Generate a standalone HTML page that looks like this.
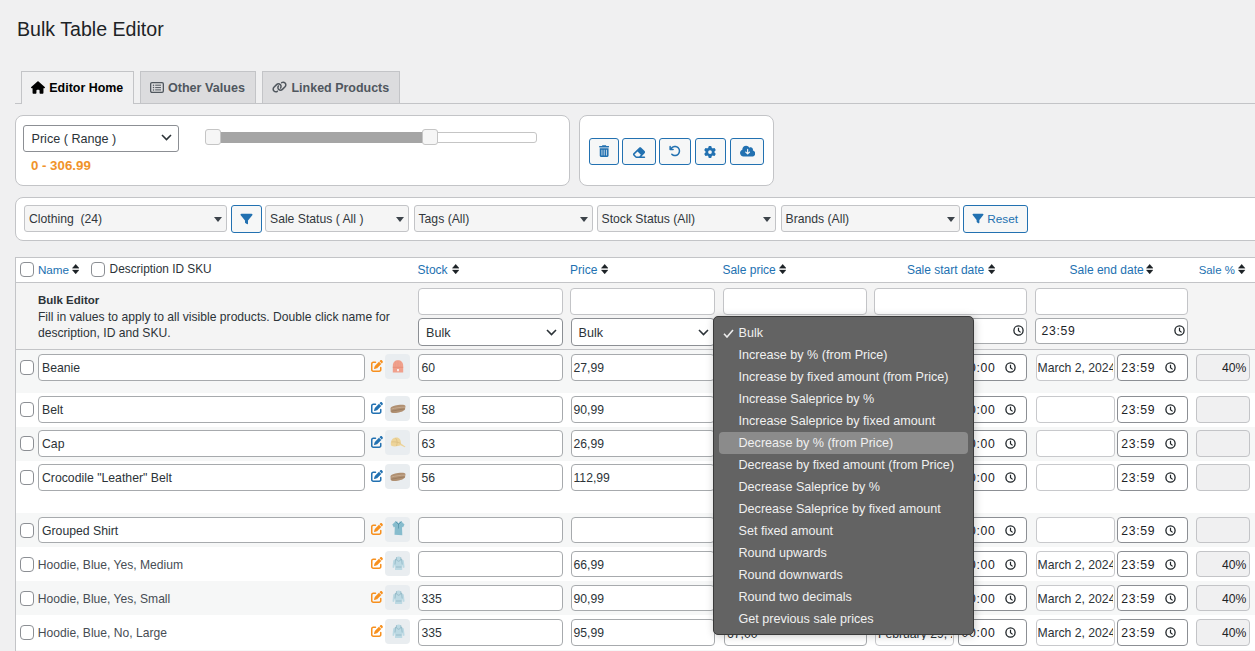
<!DOCTYPE html><html><head><meta charset="utf-8"><style>
html,body{margin:0;padding:0;width:1255px;height:651px;overflow:hidden;background:#f0f0f1;font-family:"Liberation Sans", sans-serif;}
.t{position:absolute;white-space:nowrap;}
.b{position:absolute;box-sizing:border-box;}

</style></head><body>
<div class="t" style="left:17px;top:20.21px;font-size:19.6px;line-height:19.6px;font-weight:400;color:#1d2327;">Bulk Table Editor</div>
<div class="b" style="left:15px;top:103px;width:1240px;height:1px;background:#c3c4c7;"></div>
<div class="b" style="left:21px;top:71px;width:113px;height:33px;background:#f0f0f1;border:1px solid #c3c4c7;border-bottom:none;"></div>
<div class="b" style="left:140px;top:71px;width:115.5px;height:32px;background:#dcdcde;border:1px solid #c3c4c7;border-bottom:none;"></div>
<div class="b" style="left:262px;top:71px;width:137.5px;height:32px;background:#dcdcde;border:1px solid #c3c4c7;border-bottom:none;"></div>
<svg class="b" style="left:31px;top:81px;" width="14" height="13" viewBox="0 0 576 512"><path fill="#000" d="M575.8 255.5c0 18-15 32.1-32 32.1h-32l.7 160.2c0 2.7-.2 5.4-.5 8.1V472c0 22.1-17.9 40-40 40H456c-1.1 0-2.2 0-3.3-.1c-1.4 .1-2.8 .1-4.2 .1H416 392c-22.1 0-40-17.9-40-40V448 384c0-17.7-14.3-32-32-32H256c-17.7 0-32 14.3-32 32v64 24c0 22.1-17.9 40-40 40H160 128.1c-1.5 0-3-.1-4.5-.2c-1.2 .1-2.4 .2-3.6 .2H104c-22.1 0-40-17.9-40-40V360c0-.9 0-1.9 .1-2.8V287.6H32c-18 0-32-14-32-32.1c0-9 3-17 10-24L266.4 8c7-7 15-8 22-8s15 2 21 7L564.8 231.5c8 7 12 15 11 24z"/></svg>
<div class="t" style="left:49.3px;top:82.26px;font-size:12.45px;line-height:12.45px;font-weight:700;color:#000;">Editor Home</div>
<svg class="b" style="left:150.2px;top:81.8px;" width="14" height="11" viewBox="0 0 14 11"><rect x="0.65" y="0.65" width="12.7" height="9.7" rx="1.3" stroke="#50575e" stroke-width="1.3" fill="none"/><circle cx="3.5" cy="3.2" r="0.75" fill="#50575e"/><circle cx="3.5" cy="5.6" r="0.75" fill="#50575e"/><circle cx="3.5" cy="7.9" r="0.75" fill="#50575e"/><path d="M5.2 3.2H11M5.2 5.6H11M5.2 7.9H11" stroke="#50575e" stroke-width="1"/></svg>
<div class="t" style="left:167.9px;top:82.13px;font-size:12.6px;line-height:12.6px;font-weight:700;color:#50575e;">Other Values</div>
<svg class="b" style="left:272px;top:80.5px;" width="15" height="12" viewBox="0 0 640 512"><path fill="#50575e" d="M579.8 267.7c56.5-56.5 56.5-148 0-204.5c-50-50-128.8-56.5-186.3-15.4l-1.6 1.1c-14.4 10.3-17.7 30.3-7.4 44.6s30.3 17.7 44.6 7.4l1.6-1.1c32.1-22.9 76-19.3 103.8 8.6c31.5 31.5 31.5 82.5 0 114L422.3 334.8c-31.5 31.5-82.5 31.5-114 0c-27.9-27.9-31.5-71.8-8.6-103.8l1.1-1.6c10.3-14.4 6.9-34.4-7.4-44.6s-34.4-6.9-44.6 7.4l-1.1 1.6C206.5 251.2 213 330 263 380c56.5 56.5 148 56.5 204.5 0L579.8 267.7zM60.2 244.3c-56.5 56.5-56.5 148 0 204.5c50 50 128.8 56.5 186.3 15.4l1.6-1.1c14.4-10.3 17.7-30.3 7.4-44.6s-30.3-17.7-44.6-7.4l-1.6 1.1c-32.1 22.9-76 19.3-103.8-8.6C74 372 74 321 105.5 289.5L217.7 177.2c31.5-31.5 82.5-31.5 114 0c27.9 27.9 31.5 71.8 8.6 103.9l-1.1 1.6c-10.3 14.4-6.9 34.4 7.4 44.6s34.4 6.9 44.6-7.4l1.1-1.6C433.5 260.8 427 182 377 132c-56.5-56.5-148-56.5-204.5 0L60.2 244.3z"/></svg>
<div class="t" style="left:291.5px;top:82.24px;font-size:12.47px;line-height:12.47px;font-weight:700;color:#50575e;">Linked Products</div>
<div class="b" style="left:15px;top:115px;width:555px;height:71px;background:#fff;border:1px solid #c3c4c7;border-radius:8px;"></div>
<div class="b" style="left:23px;top:125px;width:156px;height:27px;background:#fff;border:1px solid #8c8f94;border-radius:3px;"></div>
<div class="t" style="left:31.5px;top:133.13px;font-size:12.6px;line-height:12.6px;font-weight:400;color:#2c3338;">Price ( Range )</div>
<svg class="b" style="left:161px;top:134px;" width="11" height="7" viewBox="0 0 11 7"><path d="M1 1 L5.5 5.5 L10 1" stroke="#2c3338" stroke-width="1.6" fill="none"/></svg>
<div class="t" style="left:30.9px;top:158.94px;font-size:13.3px;line-height:13.3px;font-weight:700;color:#f0932b;">0 - 306.99</div>
<div class="b" style="left:205px;top:132px;width:332px;height:11px;background:#fff;border:1px solid #c5c5c5;border-radius:3px;"></div>
<div class="b" style="left:213px;top:132px;width:217px;height:11px;background:#a5a5a5;"></div>
<div class="b" style="left:205px;top:129px;width:16px;height:16px;background:#f6f6f6;border:1px solid #c5c5c5;border-radius:3px;"></div>
<div class="b" style="left:422px;top:129px;width:16px;height:16px;background:#f6f6f6;border:1px solid #c5c5c5;border-radius:3px;"></div>
<div class="b" style="left:579px;top:115px;width:195px;height:71px;background:#fff;border:1px solid #c3c4c7;border-radius:8px;"></div>
<div class="b" style="left:589px;top:138px;width:30px;height:27px;background:#f6f7f7;border:1px solid #2271b1;border-radius:3px;"></div>
<div class="b" style="left:622px;top:138px;width:34px;height:27px;background:#f6f7f7;border:1px solid #2271b1;border-radius:3px;"></div>
<div class="b" style="left:659px;top:138px;width:32px;height:27px;background:#f6f7f7;border:1px solid #2271b1;border-radius:3px;"></div>
<div class="b" style="left:695px;top:138px;width:31px;height:27px;background:#f6f7f7;border:1px solid #2271b1;border-radius:3px;"></div>
<div class="b" style="left:730px;top:138px;width:34px;height:27px;background:#f6f7f7;border:1px solid #2271b1;border-radius:3px;"></div>
<svg class="b" style="left:598.8px;top:145px;" width="10.3" height="12.3" viewBox="0 0 448 512"><path fill="#2271b1" d="M135.2 17.7C140.6 6.8 151.7 0 163.8 0H284.2c12.1 0 23.2 6.8 28.6 17.7L320 32h96c17.7 0 32 14.3 32 32s-14.3 32-32 32H32C14.3 96 0 81.7 0 64S14.3 32 32 32h96l7.2-14.3zM32 128H416V448c0 35.3-28.7 64-64 64H96c-35.3 0-64-28.7-64-64V128zm96 64c-8.8 0-16 7.2-16 16V432c0 8.8 7.2 16 16 16s16-7.2 16-16V208c0-8.8-7.2-16-16-16zm96 0c-8.8 0-16 7.2-16 16V432c0 8.8 7.2 16 16 16s16-7.2 16-16V208c0-8.8-7.2-16-16-16zm96 0c-8.8 0-16 7.2-16 16V432c0 8.8 7.2 16 16 16s16-7.2 16-16V208c0-8.8-7.2-16-16-16z"/></svg>
<svg class="b" style="left:632px;top:145.5px;" width="14" height="13" viewBox="0 0 576 512"><path fill="#2271b1" d="M290.7 57.4L57.4 290.7c-25 25-25 65.5 0 90.5l80 80c12 12 28.3 18.7 45.3 18.7H288h9.4H512c17.7 0 32-14.3 32-32s-14.3-32-32-32H387.9L518.6 285.3c25-25 25-65.5 0-90.5L381.3 57.4c-25-25-65.5-25-90.5 0zM297.4 416H288l-105.4 0-80-80L227.3 211.3 364.7 348.7 297.4 416z"/></svg>
<svg class="b" style="left:668.5px;top:145px;" width="12" height="12" viewBox="0 0 512 512"><path fill="#2271b1" d="M125.7 160H176c17.7 0 32 14.3 32 32s-14.3 32-32 32H48c-17.7 0-32-14.3-32-32V64c0-17.7 14.3-32 32-32s32 14.3 32 32v51.2L97.6 97.6c87.5-87.5 229.3-87.5 316.8 0s87.5 229.3 0 316.8s-229.3 87.5-316.8 0c-12.5-12.5-12.5-32.8 0-45.3s32.8-12.5 45.3 0c62.5 62.5 163.8 62.5 226.3 0s62.5-163.8 0-226.3s-163.8-62.5-226.3 0L125.7 160z"/></svg>
<svg class="b" style="left:704.4px;top:145.6px;" width="12" height="12" viewBox="0 0 512 512"><path fill="#2271b1" d="M495.9 166.6c3.2 8.7 .5 18.4-6.4 24.6l-43.3 39.4c1.1 8.3 1.7 16.8 1.7 25.4s-.6 17.1-1.7 25.4l43.3 39.4c6.9 6.2 9.6 15.9 6.4 24.6c-4.4 11.9-9.7 23.3-15.8 34.3l-4.7 8.1c-6.6 11-14 21.4-22.1 31.2c-5.9 7.2-15.7 9.6-24.5 6.8l-55.7-17.7c-13.4 10.3-28.2 18.9-44 25.4l-12.5 57.1c-2 9.1-9 16.3-18.2 17.8c-13.8 2.3-28 3.5-42.5 3.5s-28.7-1.2-42.5-3.5c-9.2-1.5-16.2-8.7-18.2-17.8l-12.5-57.1c-15.8-6.5-30.6-15.1-44-25.4L83.1 425.9c-8.8 2.8-18.6 .3-24.5-6.8c-8.1-9.8-15.5-20.2-22.1-31.2l-4.7-8.1c-6.1-11-11.4-22.4-15.8-34.3c-3.2-8.7-.5-18.4 6.4-24.6l43.3-39.4C64.6 273.1 64 264.6 64 256s.6-17.1 1.7-25.4L22.4 191.2c-6.9-6.2-9.6-15.9-6.4-24.6c4.4-11.9 9.7-23.3 15.8-34.3l4.7-8.1c6.6-11 14-21.4 22.1-31.2c5.9-7.2 15.7-9.6 24.5-6.8l55.7 17.7c13.4-10.3 28.2-18.9 44-25.4l12.5-57.1c2-9.1 9-16.3 18.2-17.8C227.3 1.2 241.5 0 256 0s28.7 1.2 42.5 3.5c9.2 1.5 16.2 8.7 18.2 17.8l12.5 57.1c15.8 6.5 30.6 15.1 44 25.4l55.7-17.7c8.8-2.8 18.6-.3 24.5 6.8c8.1 9.8 15.5 20.2 22.1 31.2l4.7 8.1c6.1 11 11.4 22.4 15.8 34.3zM256 336a80 80 0 1 0 0-160 80 80 0 1 0 0 160z"/></svg>
<svg class="b" style="left:739.5px;top:145.2px;" width="15.3" height="12.2" viewBox="0 0 640 512"><path fill="#2271b1" d="M144 480C64.5 480 0 415.5 0 336c0-62.8 40.2-116.2 96.2-135.9c-.1-2.7-.2-5.4-.2-8.1c0-88.4 71.6-160 160-160c59.3 0 111 32.2 138.7 80.2C409.9 102 428.3 96 448 96c53 0 96 43 96 96c0 12.2-2.3 23.8-6.4 34.6C596 238.4 640 290.1 640 352c0 70.7-57.3 128-128 128H144zm79-167l80 80c9.4 9.4 24.6 9.4 33.9 0l80-80c9.4-9.4 9.4-24.6 0-33.9s-24.6-9.4-33.9 0l-39 39V184c0-13.3-10.7-24-24-24s-24 10.7-24 24V318.1l-39-39c-9.4-9.4-24.6-9.4-33.9 0s-9.4 24.6 0 33.9z"/></svg>
<div class="b" style="left:15px;top:197px;width:1285px;height:44px;background:#fff;border:1px solid #c3c4c7;border-radius:8px;"></div>
<div class="b" style="left:24px;top:205px;width:203px;height:27px;background:#f5f5f5;border:1px solid #c3c4c7;border-radius:3px;"></div>
<div class="t" style="left:29px;top:212.97px;font-size:12.2px;line-height:12.2px;font-weight:400;color:#32373c;">Clothing&nbsp; (24)</div>
<svg class="b" style="left:214px;top:217px;" width="8" height="5" viewBox="0 0 8 5"><path d="M0 0 L8 0 L4 5 Z" fill="#3c434a"/></svg>
<div class="b" style="left:231px;top:205px;width:31px;height:27.5px;background:#f6f7f7;border:1px solid #2271b1;border-radius:3px;"></div>
<svg class="b" style="left:240px;top:212.5px;" width="13" height="12" viewBox="0 0 512 512"><path fill="#2271b1" d="M3.9 54.9C10.5 40.9 24.5 32 40 32H472c15.5 0 29.5 8.9 36.1 22.9s4.6 30.5-5.2 42.5L320 320.9V448c0 12.1-6.8 23.2-17.7 28.6s-23.8 4.3-33.5-3l-64-48c-8.1-6-12.8-15.5-12.8-25.6V320.9L9 97.3C-.7 85.4-2.8 68.8 3.9 54.9z"/></svg>
<div class="b" style="left:265px;top:205px;width:144px;height:27px;background:#f5f5f5;border:1px solid #c3c4c7;border-radius:3px;"></div>
<div class="t" style="left:270px;top:212.97px;font-size:12.2px;line-height:12.2px;font-weight:400;color:#32373c;">Sale Status ( All )</div>
<svg class="b" style="left:396px;top:217px;" width="8" height="5" viewBox="0 0 8 5"><path d="M0 0 L8 0 L4 5 Z" fill="#3c434a"/></svg>
<div class="b" style="left:413.5px;top:205px;width:179.0px;height:27px;background:#f5f5f5;border:1px solid #c3c4c7;border-radius:3px;"></div>
<div class="t" style="left:418.5px;top:212.97px;font-size:12.2px;line-height:12.2px;font-weight:400;color:#32373c;">Tags (All)</div>
<svg class="b" style="left:579.5px;top:217px;" width="8" height="5" viewBox="0 0 8 5"><path d="M0 0 L8 0 L4 5 Z" fill="#3c434a"/></svg>
<div class="b" style="left:596.5px;top:205px;width:179.0px;height:27px;background:#f5f5f5;border:1px solid #c3c4c7;border-radius:3px;"></div>
<div class="t" style="left:601.5px;top:212.97px;font-size:12.2px;line-height:12.2px;font-weight:400;color:#32373c;">Stock Status (All)</div>
<svg class="b" style="left:762.5px;top:217px;" width="8" height="5" viewBox="0 0 8 5"><path d="M0 0 L8 0 L4 5 Z" fill="#3c434a"/></svg>
<div class="b" style="left:780.5px;top:205px;width:179.0px;height:27px;background:#f5f5f5;border:1px solid #c3c4c7;border-radius:3px;"></div>
<div class="t" style="left:785.5px;top:212.97px;font-size:12.2px;line-height:12.2px;font-weight:400;color:#32373c;">Brands (All)</div>
<svg class="b" style="left:946.5px;top:217px;" width="8" height="5" viewBox="0 0 8 5"><path d="M0 0 L8 0 L4 5 Z" fill="#3c434a"/></svg>
<div class="b" style="left:963px;top:205px;width:65px;height:27.5px;background:#f6f7f7;border:1px solid #2271b1;border-radius:3px;"></div>
<svg class="b" style="left:972px;top:213px;" width="12" height="11" viewBox="0 0 512 512"><path fill="#2271b1" d="M3.9 54.9C10.5 40.9 24.5 32 40 32H472c15.5 0 29.5 8.9 36.1 22.9s4.6 30.5-5.2 42.5L320 320.9V448c0 12.1-6.8 23.2-17.7 28.6s-23.8 4.3-33.5-3l-64-48c-8.1-6-12.8-15.5-12.8-25.6V320.9L9 97.3C-.7 85.4-2.8 68.8 3.9 54.9z"/></svg>
<div class="t" style="left:987.2px;top:213.61px;font-size:11.8px;line-height:11.8px;font-weight:400;color:#2271b1;">Reset</div>
<div class="b" style="left:15px;top:257px;width:1285px;height:443px;background:#fff;border:1px solid #c3c4c7;"></div>
<div class="b" style="left:16px;top:282px;width:1284px;height:1px;background:#c3c4c7;"></div>
<div class="b" style="left:20px;top:262px;width:14px;height:15px;border:1px solid #8c8f94;border-radius:4px;background:#fff;box-sizing:border-box;"></div>
<div class="t" style="left:37.9px;top:264.40px;font-size:11.7px;line-height:11.7px;font-weight:400;color:#2271b1;">Name</div>
<svg class="b" style="left:71.8px;top:263.7px;" width="7.4" height="10.2" viewBox="0 0 7.4 10.2"><path d="M3.7 0.3 L7.1 4.2 L0.3 4.2 Z M0.3 6 L7.1 6 L3.7 9.9 Z" fill="#1d2327" stroke="#1d2327" stroke-width="0.3" stroke-linejoin="round"/></svg>
<div class="b" style="left:91px;top:262px;width:14px;height:15px;border:1px solid #8c8f94;border-radius:4px;background:#fff;box-sizing:border-box;"></div>
<div class="t" style="left:109.6px;top:264.27px;font-size:11.85px;line-height:11.85px;font-weight:400;color:#2c3338;">Description ID SKU</div>
<div class="t" style="left:417.6px;top:264.14px;font-size:12px;line-height:12px;font-weight:400;color:#2271b1;">Stock</div>
<div class="t" style="left:570.1px;top:264.14px;font-size:12px;line-height:12px;font-weight:400;color:#2271b1;">Price</div>
<div class="t" style="left:722.4px;top:264.14px;font-size:12px;line-height:12px;font-weight:400;color:#2271b1;">Sale price</div>
<div class="t" style="left:906.9px;top:264.14px;font-size:12px;line-height:12px;font-weight:400;color:#2271b1;">Sale start date</div>
<div class="t" style="left:1069.6px;top:264.14px;font-size:12px;line-height:12px;font-weight:400;color:#2271b1;">Sale end date</div>
<div class="t" style="left:1198.7px;top:264.65px;font-size:11.4px;line-height:11.4px;font-weight:400;color:#2271b1;">Sale %</div>
<svg class="b" style="left:451.5px;top:263.7px;" width="7.4" height="10.2" viewBox="0 0 7.4 10.2"><path d="M3.7 0.3 L7.1 4.2 L0.3 4.2 Z M0.3 6 L7.1 6 L3.7 9.9 Z" fill="#1d2327" stroke="#1d2327" stroke-width="0.3" stroke-linejoin="round"/></svg>
<svg class="b" style="left:600.5px;top:263.7px;" width="7.4" height="10.2" viewBox="0 0 7.4 10.2"><path d="M3.7 0.3 L7.1 4.2 L0.3 4.2 Z M0.3 6 L7.1 6 L3.7 9.9 Z" fill="#1d2327" stroke="#1d2327" stroke-width="0.3" stroke-linejoin="round"/></svg>
<svg class="b" style="left:778.7px;top:263.7px;" width="7.4" height="10.2" viewBox="0 0 7.4 10.2"><path d="M3.7 0.3 L7.1 4.2 L0.3 4.2 Z M0.3 6 L7.1 6 L3.7 9.9 Z" fill="#1d2327" stroke="#1d2327" stroke-width="0.3" stroke-linejoin="round"/></svg>
<svg class="b" style="left:988px;top:263.7px;" width="7.4" height="10.2" viewBox="0 0 7.4 10.2"><path d="M3.7 0.3 L7.1 4.2 L0.3 4.2 Z M0.3 6 L7.1 6 L3.7 9.9 Z" fill="#1d2327" stroke="#1d2327" stroke-width="0.3" stroke-linejoin="round"/></svg>
<svg class="b" style="left:1145.8px;top:263.7px;" width="7.4" height="10.2" viewBox="0 0 7.4 10.2"><path d="M3.7 0.3 L7.1 4.2 L0.3 4.2 Z M0.3 6 L7.1 6 L3.7 9.9 Z" fill="#1d2327" stroke="#1d2327" stroke-width="0.3" stroke-linejoin="round"/></svg>
<svg class="b" style="left:1238.3px;top:263.7px;" width="7.4" height="10.2" viewBox="0 0 7.4 10.2"><path d="M3.7 0.3 L7.1 4.2 L0.3 4.2 Z M0.3 6 L7.1 6 L3.7 9.9 Z" fill="#1d2327" stroke="#1d2327" stroke-width="0.3" stroke-linejoin="round"/></svg>
<div class="b" style="left:16px;top:283px;width:1284px;height:66px;background:#f4f4f4;"></div>
<div class="b" style="left:16px;top:349px;width:1284px;height:1px;background:#c3c4c7;"></div>
<div class="t" style="left:37.9px;top:295.07px;font-size:11.5px;line-height:11.5px;font-weight:700;color:#2c3338;">Bulk Editor</div>
<div class="t" style="left:37.9px;top:310.83px;font-size:12.13px;line-height:12.13px;font-weight:400;color:#2c3338;">Fill in values to apply to all visible products. Double click name for</div>
<div class="t" style="left:37.9px;top:326.53px;font-size:12.13px;line-height:12.13px;font-weight:400;color:#2c3338;">description, ID and SKU.</div>
<div class="b" style="left:417.5px;top:288px;width:145.5px;height:26.5px;background:#fff;border:1px solid #c3c4c7;border-radius:4px;"></div>
<div class="b" style="left:570px;top:288px;width:145px;height:26.5px;background:#fff;border:1px solid #c3c4c7;border-radius:4px;"></div>
<div class="b" style="left:722.5px;top:288px;width:144.5px;height:26.5px;background:#fff;border:1px solid #c3c4c7;border-radius:4px;"></div>
<div class="b" style="left:874px;top:288px;width:152.5px;height:26.5px;background:#fff;border:1px solid #c3c4c7;border-radius:4px;"></div>
<div class="b" style="left:1035px;top:288px;width:152.5px;height:26.5px;background:#fff;border:1px solid #c3c4c7;border-radius:4px;"></div>
<div class="b" style="left:418px;top:318px;width:145px;height:28px;background:#fff;border:1px solid #8c8f94;border-radius:4px;"></div>
<div class="t" style="left:426px;top:326.63px;font-size:12.6px;line-height:12.6px;font-weight:400;color:#2c3338;">Bulk</div>
<svg class="b" style="left:546px;top:329px;" width="11" height="7" viewBox="0 0 11 7"><path d="M1 1 L5.5 5.5 L10 1" stroke="#2c3338" stroke-width="1.6" fill="none"/></svg>
<div class="b" style="left:570.5px;top:318px;width:144.5px;height:28px;background:#fff;border:1px solid #8c8f94;border-radius:4px;"></div>
<div class="t" style="left:578.5px;top:326.63px;font-size:12.6px;line-height:12.6px;font-weight:400;color:#2c3338;">Bulk</div>
<svg class="b" style="left:698px;top:329px;" width="11" height="7" viewBox="0 0 11 7"><path d="M1 1 L5.5 5.5 L10 1" stroke="#2c3338" stroke-width="1.6" fill="none"/></svg>
<div class="b" style="left:874px;top:317.5px;width:152.5px;height:26.0px;background:#fff;border:1px solid #a7aaad;border-radius:4px;"></div>
<svg class="b" style="left:1012.5px;top:325.0px;" width="11" height="11" viewBox="0 0 11 11"><circle cx="5.5" cy="5.5" r="4.6" stroke="#1d2327" stroke-width="1.3" fill="none"/><path d="M5.5 2.8 V5.6 L7.6 7.4" stroke="#1d2327" stroke-width="1.2" fill="none"/></svg>
<div class="b" style="left:1035px;top:317.5px;width:152.5px;height:26.0px;background:#fff;border:1px solid #a7aaad;border-radius:4px;"></div>
<div class="t" style="left:1041.5px;top:325.47px;font-size:12.2px;line-height:12.2px;font-weight:400;color:#1d2327;letter-spacing:0.7px;">23:59</div>
<svg class="b" style="left:1173.5px;top:325.0px;" width="11" height="11" viewBox="0 0 11 11"><circle cx="5.5" cy="5.5" r="4.6" stroke="#1d2327" stroke-width="1.3" fill="none"/><path d="M5.5 2.8 V5.6 L7.6 7.4" stroke="#1d2327" stroke-width="1.2" fill="none"/></svg>
<div class="b" style="left:16px;top:350px;width:1284px;height:42.5px;background:#f6f7f7;"></div>
<div class="b" style="left:20px;top:359.9px;width:14px;height:15.0px;border:1px solid #8c8f94;border-radius:4px;background:#fff;box-sizing:border-box;"></div>
<div class="b" style="left:38px;top:354.2px;width:326.5px;height:26.399999999999977px;background:#fff;border:1px solid #a7aaad;border-radius:4px;"></div>
<div class="t" style="left:42px;top:362.22px;font-size:12.26px;line-height:12.26px;font-weight:400;color:#2c3338;">Beanie</div>
<svg class="b" style="left:371px;top:359.7px;" width="12" height="12" viewBox="0 0 512 512"><path fill="#f7901e" d="M471.6 21.7c-21.9-21.9-57.3-21.9-79.2 0L362.3 51.7l97.9 97.9 30.1-30.1c21.9-21.9 21.9-57.3 0-79.2L471.6 21.7zm-299.2 220c-6.1 6.1-10.8 13.6-13.5 21.9l-29.6 88.8c-2.9 8.6-.6 18.1 5.8 24.6s15.9 8.7 24.6 5.8l88.8-29.6c8.2-2.7 15.7-7.4 21.9-13.5L437.7 172.3 339.7 74.3 172.4 241.7zM96 64C43 64 0 107 0 160V416c0 53 43 96 96 96H352c53 0 96-43 96-96V320c0-17.7-14.3-32-32-32s-32 14.3-32 32v96c0 17.7-14.3 32-32 32H96c-17.7 0-32-14.3-32-32V160c0-17.7 14.3-32 32-32h96c17.7 0 32-14.3 32-32s-14.3-32-32-32H96z"/></svg>
<div class="b" style="left:385.2px;top:354.2px;width:24.5px;height:24.5px;background:#e9edf0;border-radius:4px;"></div>
<svg class="b" style="left:391.7px;top:359.7px;" width="12" height="13" viewBox="0 0 12 13"><path d="M0.8 12.5 V6 C0.8 2.2 3 0.3 6 0.3 C9 0.3 11.2 2.2 11.2 6 V12.5 Z" fill="#f0a08c"/><path d="M0.8 7.3 H11.2" stroke="#e48974" stroke-width="0.8"/><path d="M3.5 1.5 V7 M6 0.8 V7 M8.5 1.5 V7" stroke="#e99a86" stroke-width="0.5"/><rect x="5" y="9" width="2" height="2.2" fill="#fbe9e4"/></svg>
<div class="b" style="left:417.5px;top:354.2px;width:145.5px;height:26.399999999999977px;background:#fff;border:1px solid #a7aaad;border-radius:4px;"></div>
<div class="t" style="left:421.5px;top:362.27px;font-size:12.2px;line-height:12.2px;font-weight:400;color:#2c3338;">60</div>
<div class="b" style="left:570.5px;top:354.2px;width:144.5px;height:26.399999999999977px;background:#fff;border:1px solid #a7aaad;border-radius:4px;"></div>
<div class="t" style="left:573.5px;top:362.27px;font-size:12.2px;line-height:12.2px;font-weight:400;color:#2c3338;">27,99</div>
<div class="b" style="left:723.5px;top:354.2px;width:143.5px;height:26.399999999999977px;background:#fff;border:1px solid #a7aaad;border-radius:4px;"></div>
<div class="b" style="left:874.5px;top:354.2px;width:79.5px;height:26.399999999999977px;background:#fff;border:1px solid #c8c9cc;border-radius:4px;"></div>
<div class="b" style="left:957.5px;top:354.2px;width:69.0px;height:26.399999999999977px;background:#fff;border:1px solid #8c8f94;border-radius:4px;"></div>
<div class="t" style="left:961.5px;top:362.27px;font-size:12.2px;line-height:12.2px;font-weight:400;color:#1d2327;letter-spacing:0.7px;">00:00</div>
<svg class="b" style="left:1004.5px;top:361.7px;" width="11" height="11" viewBox="0 0 11 11"><circle cx="5.5" cy="5.5" r="4.6" stroke="#1d2327" stroke-width="1.3" fill="none"/><path d="M5.5 2.8 V5.6 L7.6 7.4" stroke="#1d2327" stroke-width="1.2" fill="none"/></svg>
<div class="b" style="left:1035.5px;top:354.2px;width:79.79999999999995px;height:26.399999999999977px;background:#fff;border:1px solid #c8c9cc;border-radius:4px;"></div>
<div class="t" style="left:1037.5px;top:362.27px;font-size:12.2px;line-height:12.2px;font-weight:400;color:#2c3338;width:75.5px;overflow:hidden;">March 2, 2024</div>
<div class="b" style="left:1117.3px;top:354.2px;width:70.70000000000005px;height:26.399999999999977px;background:#fff;border:1px solid #8c8f94;border-radius:4px;"></div>
<div class="t" style="left:1121.3px;top:362.27px;font-size:12.2px;line-height:12.2px;font-weight:400;color:#1d2327;letter-spacing:0.7px;">23:59</div>
<svg class="b" style="left:1165.2px;top:361.7px;" width="11" height="11" viewBox="0 0 11 11"><circle cx="5.5" cy="5.5" r="4.6" stroke="#1d2327" stroke-width="1.3" fill="none"/><path d="M5.5 2.8 V5.6 L7.6 7.4" stroke="#1d2327" stroke-width="1.2" fill="none"/></svg>
<div class="b" style="left:1196px;top:354.2px;width:53.5px;height:26.399999999999977px;background:#f0f0f1;border:1px solid #c3c4c7;border-radius:4px;"></div>
<div class="t" style="left:1222px;top:362.27px;font-size:12.2px;line-height:12.2px;font-weight:400;color:#1d2327;">40%</div>
<div class="b" style="left:16px;top:392.5px;width:1284px;height:34.5px;background:#fff;"></div>
<div class="b" style="left:20px;top:402.09999999999997px;width:14px;height:15.0px;border:1px solid #8c8f94;border-radius:4px;background:#fff;box-sizing:border-box;"></div>
<div class="b" style="left:38px;top:396.4px;width:326.5px;height:26.399999999999977px;background:#fff;border:1px solid #a7aaad;border-radius:4px;"></div>
<div class="t" style="left:42px;top:404.42px;font-size:12.26px;line-height:12.26px;font-weight:400;color:#2c3338;">Belt</div>
<svg class="b" style="left:371px;top:401.9px;" width="12" height="12" viewBox="0 0 512 512"><path fill="#2271b1" d="M471.6 21.7c-21.9-21.9-57.3-21.9-79.2 0L362.3 51.7l97.9 97.9 30.1-30.1c21.9-21.9 21.9-57.3 0-79.2L471.6 21.7zm-299.2 220c-6.1 6.1-10.8 13.6-13.5 21.9l-29.6 88.8c-2.9 8.6-.6 18.1 5.8 24.6s15.9 8.7 24.6 5.8l88.8-29.6c8.2-2.7 15.7-7.4 21.9-13.5L437.7 172.3 339.7 74.3 172.4 241.7zM96 64C43 64 0 107 0 160V416c0 53 43 96 96 96H352c53 0 96-43 96-96V320c0-17.7-14.3-32-32-32s-32 14.3-32 32v96c0 17.7-14.3 32-32 32H96c-17.7 0-32-14.3-32-32V160c0-17.7 14.3-32 32-32h96c17.7 0 32-14.3 32-32s-14.3-32-32-32H96z"/></svg>
<div class="b" style="left:385.2px;top:396.4px;width:24.5px;height:24.5px;background:#e9edf0;border-radius:4px;"></div>
<svg class="b" style="left:390.2px;top:403.9px;" width="16" height="10" viewBox="0 0 16 10"><path d="M0.5 4 C1 2.5 4 1.5 8 1 C11.5 0.6 15 0.5 15.5 2 L15 5.5 C14 7 10 8.5 6 9 C3 9.3 1 9 0.6 7.5 Z" fill="#b09072"/><path d="M1.5 5 C5 4 11 3 15 3.2" stroke="#c7ad92" stroke-width="0.9" fill="none"/><path d="M1.5 7.2 C5 6.5 10 5.5 14.5 5" stroke="#8f7156" stroke-width="0.6" fill="none"/></svg>
<div class="b" style="left:417.5px;top:396.4px;width:145.5px;height:26.399999999999977px;background:#fff;border:1px solid #a7aaad;border-radius:4px;"></div>
<div class="t" style="left:421.5px;top:404.47px;font-size:12.2px;line-height:12.2px;font-weight:400;color:#2c3338;">58</div>
<div class="b" style="left:570.5px;top:396.4px;width:144.5px;height:26.399999999999977px;background:#fff;border:1px solid #a7aaad;border-radius:4px;"></div>
<div class="t" style="left:573.5px;top:404.47px;font-size:12.2px;line-height:12.2px;font-weight:400;color:#2c3338;">90,99</div>
<div class="b" style="left:723.5px;top:396.4px;width:143.5px;height:26.399999999999977px;background:#fff;border:1px solid #a7aaad;border-radius:4px;"></div>
<div class="b" style="left:874.5px;top:396.4px;width:79.5px;height:26.399999999999977px;background:#fff;border:1px solid #c8c9cc;border-radius:4px;"></div>
<div class="b" style="left:957.5px;top:396.4px;width:69.0px;height:26.399999999999977px;background:#fff;border:1px solid #8c8f94;border-radius:4px;"></div>
<div class="t" style="left:961.5px;top:404.47px;font-size:12.2px;line-height:12.2px;font-weight:400;color:#1d2327;letter-spacing:0.7px;">00:00</div>
<svg class="b" style="left:1004.5px;top:403.9px;" width="11" height="11" viewBox="0 0 11 11"><circle cx="5.5" cy="5.5" r="4.6" stroke="#1d2327" stroke-width="1.3" fill="none"/><path d="M5.5 2.8 V5.6 L7.6 7.4" stroke="#1d2327" stroke-width="1.2" fill="none"/></svg>
<div class="b" style="left:1035.5px;top:396.4px;width:79.79999999999995px;height:26.399999999999977px;background:#fff;border:1px solid #c8c9cc;border-radius:4px;"></div>
<div class="b" style="left:1117.3px;top:396.4px;width:70.70000000000005px;height:26.399999999999977px;background:#fff;border:1px solid #8c8f94;border-radius:4px;"></div>
<div class="t" style="left:1121.3px;top:404.47px;font-size:12.2px;line-height:12.2px;font-weight:400;color:#1d2327;letter-spacing:0.7px;">23:59</div>
<svg class="b" style="left:1165.2px;top:403.9px;" width="11" height="11" viewBox="0 0 11 11"><circle cx="5.5" cy="5.5" r="4.6" stroke="#1d2327" stroke-width="1.3" fill="none"/><path d="M5.5 2.8 V5.6 L7.6 7.4" stroke="#1d2327" stroke-width="1.2" fill="none"/></svg>
<div class="b" style="left:1196px;top:396.4px;width:53.5px;height:26.399999999999977px;background:#f0f0f1;border:1px solid #c3c4c7;border-radius:4px;"></div>
<div class="b" style="left:16px;top:427px;width:1284px;height:33.60000000000002px;background:#f6f7f7;"></div>
<div class="b" style="left:20px;top:435.9px;width:14px;height:15.0px;border:1px solid #8c8f94;border-radius:4px;background:#fff;box-sizing:border-box;"></div>
<div class="b" style="left:38px;top:430.2px;width:326.5px;height:26.399999999999977px;background:#fff;border:1px solid #a7aaad;border-radius:4px;"></div>
<div class="t" style="left:42px;top:438.22px;font-size:12.26px;line-height:12.26px;font-weight:400;color:#2c3338;">Cap</div>
<svg class="b" style="left:371px;top:435.7px;" width="12" height="12" viewBox="0 0 512 512"><path fill="#2271b1" d="M471.6 21.7c-21.9-21.9-57.3-21.9-79.2 0L362.3 51.7l97.9 97.9 30.1-30.1c21.9-21.9 21.9-57.3 0-79.2L471.6 21.7zm-299.2 220c-6.1 6.1-10.8 13.6-13.5 21.9l-29.6 88.8c-2.9 8.6-.6 18.1 5.8 24.6s15.9 8.7 24.6 5.8l88.8-29.6c8.2-2.7 15.7-7.4 21.9-13.5L437.7 172.3 339.7 74.3 172.4 241.7zM96 64C43 64 0 107 0 160V416c0 53 43 96 96 96H352c53 0 96-43 96-96V320c0-17.7-14.3-32-32-32s-32 14.3-32 32v96c0 17.7-14.3 32-32 32H96c-17.7 0-32-14.3-32-32V160c0-17.7 14.3-32 32-32h96c17.7 0 32-14.3 32-32s-14.3-32-32-32H96z"/></svg>
<div class="b" style="left:385.2px;top:430.2px;width:24.5px;height:24.5px;background:#e9edf0;border-radius:4px;"></div>
<svg class="b" style="left:390.2px;top:436.7px;" width="16" height="11" viewBox="0 0 16 11"><path d="M1 8.5 C0.3 4.5 2 1 6 0.6 C9.5 0.4 11 3 11 6.5 L15.5 9.8 L14.8 10.3 L10.5 8.3 C7.5 9.5 3.5 10 1 8.5 Z" fill="#edd49a"/><path d="M5.5 1 C7.5 3.5 7.5 6 6.5 9 M1.5 5 C4 4.5 8 5 10.5 6.3" stroke="#d5b77a" stroke-width="0.6" fill="none"/></svg>
<div class="b" style="left:417.5px;top:430.2px;width:145.5px;height:26.399999999999977px;background:#fff;border:1px solid #a7aaad;border-radius:4px;"></div>
<div class="t" style="left:421.5px;top:438.27px;font-size:12.2px;line-height:12.2px;font-weight:400;color:#2c3338;">63</div>
<div class="b" style="left:570.5px;top:430.2px;width:144.5px;height:26.399999999999977px;background:#fff;border:1px solid #a7aaad;border-radius:4px;"></div>
<div class="t" style="left:573.5px;top:438.27px;font-size:12.2px;line-height:12.2px;font-weight:400;color:#2c3338;">26,99</div>
<div class="b" style="left:723.5px;top:430.2px;width:143.5px;height:26.399999999999977px;background:#fff;border:1px solid #a7aaad;border-radius:4px;"></div>
<div class="b" style="left:874.5px;top:430.2px;width:79.5px;height:26.399999999999977px;background:#fff;border:1px solid #c8c9cc;border-radius:4px;"></div>
<div class="b" style="left:957.5px;top:430.2px;width:69.0px;height:26.399999999999977px;background:#fff;border:1px solid #8c8f94;border-radius:4px;"></div>
<div class="t" style="left:961.5px;top:438.27px;font-size:12.2px;line-height:12.2px;font-weight:400;color:#1d2327;letter-spacing:0.7px;">00:00</div>
<svg class="b" style="left:1004.5px;top:437.7px;" width="11" height="11" viewBox="0 0 11 11"><circle cx="5.5" cy="5.5" r="4.6" stroke="#1d2327" stroke-width="1.3" fill="none"/><path d="M5.5 2.8 V5.6 L7.6 7.4" stroke="#1d2327" stroke-width="1.2" fill="none"/></svg>
<div class="b" style="left:1035.5px;top:430.2px;width:79.79999999999995px;height:26.399999999999977px;background:#fff;border:1px solid #c8c9cc;border-radius:4px;"></div>
<div class="b" style="left:1117.3px;top:430.2px;width:70.70000000000005px;height:26.399999999999977px;background:#fff;border:1px solid #8c8f94;border-radius:4px;"></div>
<div class="t" style="left:1121.3px;top:438.27px;font-size:12.2px;line-height:12.2px;font-weight:400;color:#1d2327;letter-spacing:0.7px;">23:59</div>
<svg class="b" style="left:1165.2px;top:437.7px;" width="11" height="11" viewBox="0 0 11 11"><circle cx="5.5" cy="5.5" r="4.6" stroke="#1d2327" stroke-width="1.3" fill="none"/><path d="M5.5 2.8 V5.6 L7.6 7.4" stroke="#1d2327" stroke-width="1.2" fill="none"/></svg>
<div class="b" style="left:1196px;top:430.2px;width:53.5px;height:26.399999999999977px;background:#f0f0f1;border:1px solid #c3c4c7;border-radius:4px;"></div>
<div class="b" style="left:16px;top:460.6px;width:1284px;height:52.39999999999998px;background:#fff;"></div>
<div class="b" style="left:20px;top:470.0px;width:14px;height:15.0px;border:1px solid #8c8f94;border-radius:4px;background:#fff;box-sizing:border-box;"></div>
<div class="b" style="left:38px;top:464.3px;width:326.5px;height:26.399999999999977px;background:#fff;border:1px solid #a7aaad;border-radius:4px;"></div>
<div class="t" style="left:42px;top:472.32px;font-size:12.26px;line-height:12.26px;font-weight:400;color:#2c3338;">Crocodile &quot;Leather&quot; Belt</div>
<svg class="b" style="left:371px;top:469.8px;" width="12" height="12" viewBox="0 0 512 512"><path fill="#2271b1" d="M471.6 21.7c-21.9-21.9-57.3-21.9-79.2 0L362.3 51.7l97.9 97.9 30.1-30.1c21.9-21.9 21.9-57.3 0-79.2L471.6 21.7zm-299.2 220c-6.1 6.1-10.8 13.6-13.5 21.9l-29.6 88.8c-2.9 8.6-.6 18.1 5.8 24.6s15.9 8.7 24.6 5.8l88.8-29.6c8.2-2.7 15.7-7.4 21.9-13.5L437.7 172.3 339.7 74.3 172.4 241.7zM96 64C43 64 0 107 0 160V416c0 53 43 96 96 96H352c53 0 96-43 96-96V320c0-17.7-14.3-32-32-32s-32 14.3-32 32v96c0 17.7-14.3 32-32 32H96c-17.7 0-32-14.3-32-32V160c0-17.7 14.3-32 32-32h96c17.7 0 32-14.3 32-32s-14.3-32-32-32H96z"/></svg>
<div class="b" style="left:385.2px;top:464.3px;width:24.5px;height:24.5px;background:#e9edf0;border-radius:4px;"></div>
<svg class="b" style="left:390.2px;top:471.8px;" width="16" height="10" viewBox="0 0 16 10"><path d="M0.5 4 C1 2.5 4 1.5 8 1 C11.5 0.6 15 0.5 15.5 2 L15 5.5 C14 7 10 8.5 6 9 C3 9.3 1 9 0.6 7.5 Z" fill="#b09072"/><path d="M1.5 5 C5 4 11 3 15 3.2" stroke="#c7ad92" stroke-width="0.9" fill="none"/><path d="M1.5 7.2 C5 6.5 10 5.5 14.5 5" stroke="#8f7156" stroke-width="0.6" fill="none"/></svg>
<div class="b" style="left:417.5px;top:464.3px;width:145.5px;height:26.399999999999977px;background:#fff;border:1px solid #a7aaad;border-radius:4px;"></div>
<div class="t" style="left:421.5px;top:472.37px;font-size:12.2px;line-height:12.2px;font-weight:400;color:#2c3338;">56</div>
<div class="b" style="left:570.5px;top:464.3px;width:144.5px;height:26.399999999999977px;background:#fff;border:1px solid #a7aaad;border-radius:4px;"></div>
<div class="t" style="left:573.5px;top:472.37px;font-size:12.2px;line-height:12.2px;font-weight:400;color:#2c3338;">112,99</div>
<div class="b" style="left:723.5px;top:464.3px;width:143.5px;height:26.399999999999977px;background:#fff;border:1px solid #a7aaad;border-radius:4px;"></div>
<div class="b" style="left:874.5px;top:464.3px;width:79.5px;height:26.399999999999977px;background:#fff;border:1px solid #c8c9cc;border-radius:4px;"></div>
<div class="b" style="left:957.5px;top:464.3px;width:69.0px;height:26.399999999999977px;background:#fff;border:1px solid #8c8f94;border-radius:4px;"></div>
<div class="t" style="left:961.5px;top:472.37px;font-size:12.2px;line-height:12.2px;font-weight:400;color:#1d2327;letter-spacing:0.7px;">00:00</div>
<svg class="b" style="left:1004.5px;top:471.8px;" width="11" height="11" viewBox="0 0 11 11"><circle cx="5.5" cy="5.5" r="4.6" stroke="#1d2327" stroke-width="1.3" fill="none"/><path d="M5.5 2.8 V5.6 L7.6 7.4" stroke="#1d2327" stroke-width="1.2" fill="none"/></svg>
<div class="b" style="left:1035.5px;top:464.3px;width:79.79999999999995px;height:26.399999999999977px;background:#fff;border:1px solid #c8c9cc;border-radius:4px;"></div>
<div class="b" style="left:1117.3px;top:464.3px;width:70.70000000000005px;height:26.399999999999977px;background:#fff;border:1px solid #8c8f94;border-radius:4px;"></div>
<div class="t" style="left:1121.3px;top:472.37px;font-size:12.2px;line-height:12.2px;font-weight:400;color:#1d2327;letter-spacing:0.7px;">23:59</div>
<svg class="b" style="left:1165.2px;top:471.8px;" width="11" height="11" viewBox="0 0 11 11"><circle cx="5.5" cy="5.5" r="4.6" stroke="#1d2327" stroke-width="1.3" fill="none"/><path d="M5.5 2.8 V5.6 L7.6 7.4" stroke="#1d2327" stroke-width="1.2" fill="none"/></svg>
<div class="b" style="left:1196px;top:464.3px;width:53.5px;height:26.399999999999977px;background:#f0f0f1;border:1px solid #c3c4c7;border-radius:4px;"></div>
<div class="b" style="left:16px;top:513px;width:1284px;height:33.799999999999955px;background:#f6f7f7;"></div>
<div class="b" style="left:20px;top:522.7px;width:14px;height:15.0px;border:1px solid #8c8f94;border-radius:4px;background:#fff;box-sizing:border-box;"></div>
<div class="b" style="left:38px;top:517px;width:326.5px;height:26.399999999999977px;background:#fff;border:1px solid #a7aaad;border-radius:4px;"></div>
<div class="t" style="left:42px;top:525.02px;font-size:12.26px;line-height:12.26px;font-weight:400;color:#2c3338;">Grouped Shirt</div>
<svg class="b" style="left:371px;top:522.5px;" width="12" height="12" viewBox="0 0 512 512"><path fill="#f7901e" d="M471.6 21.7c-21.9-21.9-57.3-21.9-79.2 0L362.3 51.7l97.9 97.9 30.1-30.1c21.9-21.9 21.9-57.3 0-79.2L471.6 21.7zm-299.2 220c-6.1 6.1-10.8 13.6-13.5 21.9l-29.6 88.8c-2.9 8.6-.6 18.1 5.8 24.6s15.9 8.7 24.6 5.8l88.8-29.6c8.2-2.7 15.7-7.4 21.9-13.5L437.7 172.3 339.7 74.3 172.4 241.7zM96 64C43 64 0 107 0 160V416c0 53 43 96 96 96H352c53 0 96-43 96-96V320c0-17.7-14.3-32-32-32s-32 14.3-32 32v96c0 17.7-14.3 32-32 32H96c-17.7 0-32-14.3-32-32V160c0-17.7 14.3-32 32-32h96c17.7 0 32-14.3 32-32s-14.3-32-32-32H96z"/></svg>
<div class="b" style="left:385.2px;top:517px;width:24.5px;height:24.5px;background:#e9edf0;border-radius:4px;"></div>
<svg class="b" style="left:391.7px;top:521px;" width="13" height="15" viewBox="0 0 13 15"><path d="M3.5 0.5 L5.2 0.5 L6.5 2.5 L7.8 0.5 L9.5 0.5 L12.5 3.5 L11 6.5 L10 5.8 L10.3 14.3 L2.5 13.8 L2.8 5.8 L1.8 6.5 L0.3 3.5 Z" fill="#86bccd"/><path d="M6.5 2.5 V7.5 M3.5 0.5 L6.5 3.5 L9.5 0.5" stroke="#4f8ea5" stroke-width="0.7" fill="none"/></svg>
<div class="b" style="left:417.5px;top:517px;width:145.5px;height:26.399999999999977px;background:#fff;border:1px solid #a7aaad;border-radius:4px;"></div>
<div class="b" style="left:570.5px;top:517px;width:144.5px;height:26.399999999999977px;background:#fff;border:1px solid #a7aaad;border-radius:4px;"></div>
<div class="b" style="left:723.5px;top:517px;width:143.5px;height:26.399999999999977px;background:#fff;border:1px solid #a7aaad;border-radius:4px;"></div>
<div class="b" style="left:874.5px;top:517px;width:79.5px;height:26.399999999999977px;background:#fff;border:1px solid #c8c9cc;border-radius:4px;"></div>
<div class="b" style="left:957.5px;top:517px;width:69.0px;height:26.399999999999977px;background:#fff;border:1px solid #8c8f94;border-radius:4px;"></div>
<div class="t" style="left:961.5px;top:525.07px;font-size:12.2px;line-height:12.2px;font-weight:400;color:#1d2327;letter-spacing:0.7px;">00:00</div>
<svg class="b" style="left:1004.5px;top:524.5px;" width="11" height="11" viewBox="0 0 11 11"><circle cx="5.5" cy="5.5" r="4.6" stroke="#1d2327" stroke-width="1.3" fill="none"/><path d="M5.5 2.8 V5.6 L7.6 7.4" stroke="#1d2327" stroke-width="1.2" fill="none"/></svg>
<div class="b" style="left:1035.5px;top:517px;width:79.79999999999995px;height:26.399999999999977px;background:#fff;border:1px solid #c8c9cc;border-radius:4px;"></div>
<div class="b" style="left:1117.3px;top:517px;width:70.70000000000005px;height:26.399999999999977px;background:#fff;border:1px solid #8c8f94;border-radius:4px;"></div>
<div class="t" style="left:1121.3px;top:525.07px;font-size:12.2px;line-height:12.2px;font-weight:400;color:#1d2327;letter-spacing:0.7px;">23:59</div>
<svg class="b" style="left:1165.2px;top:524.5px;" width="11" height="11" viewBox="0 0 11 11"><circle cx="5.5" cy="5.5" r="4.6" stroke="#1d2327" stroke-width="1.3" fill="none"/><path d="M5.5 2.8 V5.6 L7.6 7.4" stroke="#1d2327" stroke-width="1.2" fill="none"/></svg>
<div class="b" style="left:1196px;top:517px;width:53.5px;height:26.399999999999977px;background:#f0f0f1;border:1px solid #c3c4c7;border-radius:4px;"></div>
<div class="b" style="left:16px;top:546.8px;width:1284px;height:34.200000000000045px;background:#fff;"></div>
<div class="b" style="left:20px;top:556.7px;width:14px;height:15.0px;border:1px solid #8c8f94;border-radius:4px;background:#fff;box-sizing:border-box;"></div>
<div class="t" style="left:37.8px;top:559.16px;font-size:12.1px;line-height:12.1px;font-weight:400;color:#474d54;">Hoodie, Blue, Yes, Medium</div>
<svg class="b" style="left:371px;top:556.5px;" width="12" height="12" viewBox="0 0 512 512"><path fill="#f7901e" d="M471.6 21.7c-21.9-21.9-57.3-21.9-79.2 0L362.3 51.7l97.9 97.9 30.1-30.1c21.9-21.9 21.9-57.3 0-79.2L471.6 21.7zm-299.2 220c-6.1 6.1-10.8 13.6-13.5 21.9l-29.6 88.8c-2.9 8.6-.6 18.1 5.8 24.6s15.9 8.7 24.6 5.8l88.8-29.6c8.2-2.7 15.7-7.4 21.9-13.5L437.7 172.3 339.7 74.3 172.4 241.7zM96 64C43 64 0 107 0 160V416c0 53 43 96 96 96H352c53 0 96-43 96-96V320c0-17.7-14.3-32-32-32s-32 14.3-32 32v96c0 17.7-14.3 32-32 32H96c-17.7 0-32-14.3-32-32V160c0-17.7 14.3-32 32-32h96c17.7 0 32-14.3 32-32s-14.3-32-32-32H96z"/></svg>
<div class="b" style="left:385.2px;top:551px;width:24.5px;height:24.5px;background:#e9edf0;border-radius:4px;"></div>
<svg class="b" style="left:391.7px;top:556px;" width="13" height="15" viewBox="0 0 13 15"><path d="M4.5 1.2 C5.5 0.2 7.8 0.2 8.8 1.3 L9.5 3 L11.8 4.5 L12.6 11.5 L11 12 L10.2 8.5 L10.2 14 L3 14 L3 8.5 L2 12 L0.5 11.5 L1.2 4.5 L3.6 3 Z" fill="#bcd9e3"/><path d="M4.5 1.2 C4 3.5 5 5.2 6.6 5.2 C8.2 5.2 9.3 3.5 8.8 1.3 M3 8.5 L3.6 3 M10.2 8.5 L9.5 3 M4 11 H9.5" stroke="#7fa9b8" stroke-width="0.6" fill="none"/></svg>
<div class="b" style="left:417.5px;top:551px;width:145.5px;height:26.399999999999977px;background:#fff;border:1px solid #a7aaad;border-radius:4px;"></div>
<div class="b" style="left:570.5px;top:551px;width:144.5px;height:26.399999999999977px;background:#fff;border:1px solid #a7aaad;border-radius:4px;"></div>
<div class="t" style="left:573.5px;top:559.07px;font-size:12.2px;line-height:12.2px;font-weight:400;color:#2c3338;">66,99</div>
<div class="b" style="left:723.5px;top:551px;width:143.5px;height:26.399999999999977px;background:#fff;border:1px solid #a7aaad;border-radius:4px;"></div>
<div class="b" style="left:874.5px;top:551px;width:79.5px;height:26.399999999999977px;background:#fff;border:1px solid #c8c9cc;border-radius:4px;"></div>
<div class="b" style="left:957.5px;top:551px;width:69.0px;height:26.399999999999977px;background:#fff;border:1px solid #8c8f94;border-radius:4px;"></div>
<div class="t" style="left:961.5px;top:559.07px;font-size:12.2px;line-height:12.2px;font-weight:400;color:#1d2327;letter-spacing:0.7px;">00:00</div>
<svg class="b" style="left:1004.5px;top:558.5px;" width="11" height="11" viewBox="0 0 11 11"><circle cx="5.5" cy="5.5" r="4.6" stroke="#1d2327" stroke-width="1.3" fill="none"/><path d="M5.5 2.8 V5.6 L7.6 7.4" stroke="#1d2327" stroke-width="1.2" fill="none"/></svg>
<div class="b" style="left:1035.5px;top:551px;width:79.79999999999995px;height:26.399999999999977px;background:#fff;border:1px solid #c8c9cc;border-radius:4px;"></div>
<div class="t" style="left:1037.5px;top:559.07px;font-size:12.2px;line-height:12.2px;font-weight:400;color:#2c3338;width:75.5px;overflow:hidden;">March 2, 2024</div>
<div class="b" style="left:1117.3px;top:551px;width:70.70000000000005px;height:26.399999999999977px;background:#fff;border:1px solid #8c8f94;border-radius:4px;"></div>
<div class="t" style="left:1121.3px;top:559.07px;font-size:12.2px;line-height:12.2px;font-weight:400;color:#1d2327;letter-spacing:0.7px;">23:59</div>
<svg class="b" style="left:1165.2px;top:558.5px;" width="11" height="11" viewBox="0 0 11 11"><circle cx="5.5" cy="5.5" r="4.6" stroke="#1d2327" stroke-width="1.3" fill="none"/><path d="M5.5 2.8 V5.6 L7.6 7.4" stroke="#1d2327" stroke-width="1.2" fill="none"/></svg>
<div class="b" style="left:1196px;top:551px;width:53.5px;height:26.399999999999977px;background:#f0f0f1;border:1px solid #c3c4c7;border-radius:4px;"></div>
<div class="t" style="left:1222px;top:559.07px;font-size:12.2px;line-height:12.2px;font-weight:400;color:#1d2327;">40%</div>
<div class="b" style="left:16px;top:581px;width:1284px;height:33.60000000000002px;background:#f6f7f7;"></div>
<div class="b" style="left:20px;top:590.8000000000001px;width:14px;height:15.0px;border:1px solid #8c8f94;border-radius:4px;background:#fff;box-sizing:border-box;"></div>
<div class="t" style="left:37.8px;top:593.26px;font-size:12.1px;line-height:12.1px;font-weight:400;color:#474d54;">Hoodie, Blue, Yes, Small</div>
<svg class="b" style="left:371px;top:590.6px;" width="12" height="12" viewBox="0 0 512 512"><path fill="#f7901e" d="M471.6 21.7c-21.9-21.9-57.3-21.9-79.2 0L362.3 51.7l97.9 97.9 30.1-30.1c21.9-21.9 21.9-57.3 0-79.2L471.6 21.7zm-299.2 220c-6.1 6.1-10.8 13.6-13.5 21.9l-29.6 88.8c-2.9 8.6-.6 18.1 5.8 24.6s15.9 8.7 24.6 5.8l88.8-29.6c8.2-2.7 15.7-7.4 21.9-13.5L437.7 172.3 339.7 74.3 172.4 241.7zM96 64C43 64 0 107 0 160V416c0 53 43 96 96 96H352c53 0 96-43 96-96V320c0-17.7-14.3-32-32-32s-32 14.3-32 32v96c0 17.7-14.3 32-32 32H96c-17.7 0-32-14.3-32-32V160c0-17.7 14.3-32 32-32h96c17.7 0 32-14.3 32-32s-14.3-32-32-32H96z"/></svg>
<div class="b" style="left:385.2px;top:585.1px;width:24.5px;height:24.5px;background:#e9edf0;border-radius:4px;"></div>
<svg class="b" style="left:391.7px;top:590.1px;" width="13" height="15" viewBox="0 0 13 15"><path d="M4.5 1.2 C5.5 0.2 7.8 0.2 8.8 1.3 L9.5 3 L11.8 4.5 L12.6 11.5 L11 12 L10.2 8.5 L10.2 14 L3 14 L3 8.5 L2 12 L0.5 11.5 L1.2 4.5 L3.6 3 Z" fill="#bcd9e3"/><path d="M4.5 1.2 C4 3.5 5 5.2 6.6 5.2 C8.2 5.2 9.3 3.5 8.8 1.3 M3 8.5 L3.6 3 M10.2 8.5 L9.5 3 M4 11 H9.5" stroke="#7fa9b8" stroke-width="0.6" fill="none"/></svg>
<div class="b" style="left:417.5px;top:585.1px;width:145.5px;height:26.399999999999977px;background:#fff;border:1px solid #a7aaad;border-radius:4px;"></div>
<div class="t" style="left:421.5px;top:593.17px;font-size:12.2px;line-height:12.2px;font-weight:400;color:#2c3338;">335</div>
<div class="b" style="left:570.5px;top:585.1px;width:144.5px;height:26.399999999999977px;background:#fff;border:1px solid #a7aaad;border-radius:4px;"></div>
<div class="t" style="left:573.5px;top:593.17px;font-size:12.2px;line-height:12.2px;font-weight:400;color:#2c3338;">90,99</div>
<div class="b" style="left:723.5px;top:585.1px;width:143.5px;height:26.399999999999977px;background:#fff;border:1px solid #a7aaad;border-radius:4px;"></div>
<div class="b" style="left:874.5px;top:585.1px;width:79.5px;height:26.399999999999977px;background:#fff;border:1px solid #c8c9cc;border-radius:4px;"></div>
<div class="b" style="left:957.5px;top:585.1px;width:69.0px;height:26.399999999999977px;background:#fff;border:1px solid #8c8f94;border-radius:4px;"></div>
<div class="t" style="left:961.5px;top:593.17px;font-size:12.2px;line-height:12.2px;font-weight:400;color:#1d2327;letter-spacing:0.7px;">00:00</div>
<svg class="b" style="left:1004.5px;top:592.6px;" width="11" height="11" viewBox="0 0 11 11"><circle cx="5.5" cy="5.5" r="4.6" stroke="#1d2327" stroke-width="1.3" fill="none"/><path d="M5.5 2.8 V5.6 L7.6 7.4" stroke="#1d2327" stroke-width="1.2" fill="none"/></svg>
<div class="b" style="left:1035.5px;top:585.1px;width:79.79999999999995px;height:26.399999999999977px;background:#fff;border:1px solid #c8c9cc;border-radius:4px;"></div>
<div class="t" style="left:1037.5px;top:593.17px;font-size:12.2px;line-height:12.2px;font-weight:400;color:#2c3338;width:75.5px;overflow:hidden;">March 2, 2024</div>
<div class="b" style="left:1117.3px;top:585.1px;width:70.70000000000005px;height:26.399999999999977px;background:#fff;border:1px solid #8c8f94;border-radius:4px;"></div>
<div class="t" style="left:1121.3px;top:593.17px;font-size:12.2px;line-height:12.2px;font-weight:400;color:#1d2327;letter-spacing:0.7px;">23:59</div>
<svg class="b" style="left:1165.2px;top:592.6px;" width="11" height="11" viewBox="0 0 11 11"><circle cx="5.5" cy="5.5" r="4.6" stroke="#1d2327" stroke-width="1.3" fill="none"/><path d="M5.5 2.8 V5.6 L7.6 7.4" stroke="#1d2327" stroke-width="1.2" fill="none"/></svg>
<div class="b" style="left:1196px;top:585.1px;width:53.5px;height:26.399999999999977px;background:#f0f0f1;border:1px solid #c3c4c7;border-radius:4px;"></div>
<div class="t" style="left:1222px;top:593.17px;font-size:12.2px;line-height:12.2px;font-weight:400;color:#1d2327;">40%</div>
<div class="b" style="left:16px;top:614.6px;width:1284px;height:34.89999999999998px;background:#fff;"></div>
<div class="b" style="left:20px;top:624.9000000000001px;width:14px;height:15.0px;border:1px solid #8c8f94;border-radius:4px;background:#fff;box-sizing:border-box;"></div>
<div class="t" style="left:37.8px;top:627.36px;font-size:12.1px;line-height:12.1px;font-weight:400;color:#474d54;">Hoodie, Blue, No, Large</div>
<svg class="b" style="left:371px;top:624.7px;" width="12" height="12" viewBox="0 0 512 512"><path fill="#f7901e" d="M471.6 21.7c-21.9-21.9-57.3-21.9-79.2 0L362.3 51.7l97.9 97.9 30.1-30.1c21.9-21.9 21.9-57.3 0-79.2L471.6 21.7zm-299.2 220c-6.1 6.1-10.8 13.6-13.5 21.9l-29.6 88.8c-2.9 8.6-.6 18.1 5.8 24.6s15.9 8.7 24.6 5.8l88.8-29.6c8.2-2.7 15.7-7.4 21.9-13.5L437.7 172.3 339.7 74.3 172.4 241.7zM96 64C43 64 0 107 0 160V416c0 53 43 96 96 96H352c53 0 96-43 96-96V320c0-17.7-14.3-32-32-32s-32 14.3-32 32v96c0 17.7-14.3 32-32 32H96c-17.7 0-32-14.3-32-32V160c0-17.7 14.3-32 32-32h96c17.7 0 32-14.3 32-32s-14.3-32-32-32H96z"/></svg>
<div class="b" style="left:385.2px;top:619.2px;width:24.5px;height:24.5px;background:#e9edf0;border-radius:4px;"></div>
<svg class="b" style="left:391.7px;top:624.2px;" width="13" height="15" viewBox="0 0 13 15"><path d="M4.5 1.2 C5.5 0.2 7.8 0.2 8.8 1.3 L9.5 3 L11.8 4.5 L12.6 11.5 L11 12 L10.2 8.5 L10.2 14 L3 14 L3 8.5 L2 12 L0.5 11.5 L1.2 4.5 L3.6 3 Z" fill="#bcd9e3"/><path d="M4.5 1.2 C4 3.5 5 5.2 6.6 5.2 C8.2 5.2 9.3 3.5 8.8 1.3 M3 8.5 L3.6 3 M10.2 8.5 L9.5 3 M4 11 H9.5" stroke="#7fa9b8" stroke-width="0.6" fill="none"/></svg>
<div class="b" style="left:417.5px;top:619.2px;width:145.5px;height:26.399999999999977px;background:#fff;border:1px solid #a7aaad;border-radius:4px;"></div>
<div class="t" style="left:421.5px;top:627.27px;font-size:12.2px;line-height:12.2px;font-weight:400;color:#2c3338;">335</div>
<div class="b" style="left:570.5px;top:619.2px;width:144.5px;height:26.399999999999977px;background:#fff;border:1px solid #a7aaad;border-radius:4px;"></div>
<div class="t" style="left:573.5px;top:627.27px;font-size:12.2px;line-height:12.2px;font-weight:400;color:#2c3338;">95,99</div>
<div class="b" style="left:723.5px;top:619.2px;width:143.5px;height:26.399999999999977px;background:#fff;border:1px solid #a7aaad;border-radius:4px;"></div>
<div class="b" style="left:874.5px;top:619.2px;width:79.5px;height:26.399999999999977px;background:#fff;border:1px solid #c8c9cc;border-radius:4px;"></div>
<div class="b" style="left:957.5px;top:619.2px;width:69.0px;height:26.399999999999977px;background:#fff;border:1px solid #8c8f94;border-radius:4px;"></div>
<div class="t" style="left:961.5px;top:627.27px;font-size:12.2px;line-height:12.2px;font-weight:400;color:#1d2327;letter-spacing:0.7px;">00:00</div>
<svg class="b" style="left:1004.5px;top:626.7px;" width="11" height="11" viewBox="0 0 11 11"><circle cx="5.5" cy="5.5" r="4.6" stroke="#1d2327" stroke-width="1.3" fill="none"/><path d="M5.5 2.8 V5.6 L7.6 7.4" stroke="#1d2327" stroke-width="1.2" fill="none"/></svg>
<div class="b" style="left:1035.5px;top:619.2px;width:79.79999999999995px;height:26.399999999999977px;background:#fff;border:1px solid #c8c9cc;border-radius:4px;"></div>
<div class="t" style="left:1037.5px;top:627.27px;font-size:12.2px;line-height:12.2px;font-weight:400;color:#2c3338;width:75.5px;overflow:hidden;">March 2, 2024</div>
<div class="b" style="left:1117.3px;top:619.2px;width:70.70000000000005px;height:26.399999999999977px;background:#fff;border:1px solid #8c8f94;border-radius:4px;"></div>
<div class="t" style="left:1121.3px;top:627.27px;font-size:12.2px;line-height:12.2px;font-weight:400;color:#1d2327;letter-spacing:0.7px;">23:59</div>
<svg class="b" style="left:1165.2px;top:626.7px;" width="11" height="11" viewBox="0 0 11 11"><circle cx="5.5" cy="5.5" r="4.6" stroke="#1d2327" stroke-width="1.3" fill="none"/><path d="M5.5 2.8 V5.6 L7.6 7.4" stroke="#1d2327" stroke-width="1.2" fill="none"/></svg>
<div class="b" style="left:1196px;top:619.2px;width:53.5px;height:26.399999999999977px;background:#f0f0f1;border:1px solid #c3c4c7;border-radius:4px;"></div>
<div class="t" style="left:1222px;top:627.27px;font-size:12.2px;line-height:12.2px;font-weight:400;color:#1d2327;">40%</div>
<div class="b" style="left:16px;top:649.5px;width:1284px;height:1.5px;background:#f6f7f7;"></div>
<div class="t" style="left:727px;top:627.97px;font-size:12.2px;line-height:12.2px;font-weight:400;color:#2c3338;">67,00</div>
<div class="t" style="left:878px;top:627.97px;font-size:12.2px;line-height:12.2px;font-weight:400;color:#2c3338;width:74px;overflow:hidden;">February 29, 2024</div>
<div class="b" style="left:713px;top:316px;width:261px;height:319px;background:#636363;border:1px solid #3a3a3a;border-radius:5px;box-shadow:1px 1px 8px rgba(0,0,0,0.22);"></div>
<div class="b" style="left:719px;top:432px;width:249px;height:22px;background:#8b8b8b;border-radius:4px;"></div>
<div class="t" style="left:738.5px;top:326.83px;font-size:12.6px;line-height:12.6px;font-weight:400;color:#f0f0f0;">Bulk</div>
<div class="t" style="left:738.5px;top:348.83px;font-size:12.6px;line-height:12.6px;font-weight:400;color:#f0f0f0;">Increase by % (from Price)</div>
<div class="t" style="left:738.5px;top:370.83px;font-size:12.6px;line-height:12.6px;font-weight:400;color:#f0f0f0;">Increase by fixed amount (from Price)</div>
<div class="t" style="left:738.5px;top:392.83px;font-size:12.6px;line-height:12.6px;font-weight:400;color:#f0f0f0;">Increase Saleprice by %</div>
<div class="t" style="left:738.5px;top:414.83px;font-size:12.6px;line-height:12.6px;font-weight:400;color:#f0f0f0;">Increase Saleprice by fixed amount</div>
<div class="t" style="left:738.5px;top:436.83px;font-size:12.6px;line-height:12.6px;font-weight:400;color:#f0f0f0;">Decrease by % (from Price)</div>
<div class="t" style="left:738.5px;top:458.83px;font-size:12.6px;line-height:12.6px;font-weight:400;color:#f0f0f0;">Decrease by fixed amount (from Price)</div>
<div class="t" style="left:738.5px;top:480.83px;font-size:12.6px;line-height:12.6px;font-weight:400;color:#f0f0f0;">Decrease Saleprice by %</div>
<div class="t" style="left:738.5px;top:502.83px;font-size:12.6px;line-height:12.6px;font-weight:400;color:#f0f0f0;">Decrease Saleprice by fixed amount</div>
<div class="t" style="left:738.5px;top:524.83px;font-size:12.6px;line-height:12.6px;font-weight:400;color:#f0f0f0;">Set fixed amount</div>
<div class="t" style="left:738.5px;top:546.83px;font-size:12.6px;line-height:12.6px;font-weight:400;color:#f0f0f0;">Round upwards</div>
<div class="t" style="left:738.5px;top:568.83px;font-size:12.6px;line-height:12.6px;font-weight:400;color:#f0f0f0;">Round downwards</div>
<div class="t" style="left:738.5px;top:590.83px;font-size:12.6px;line-height:12.6px;font-weight:400;color:#f0f0f0;">Round two decimals</div>
<div class="t" style="left:738.5px;top:612.83px;font-size:12.6px;line-height:12.6px;font-weight:400;color:#f0f0f0;">Get previous sale prices</div>
<svg class="b" style="left:723px;top:329px;" width="11" height="9" viewBox="0 0 11 9"><path d="M1 4.8 L4 8 L10 1" stroke="#ececec" stroke-width="1.6" fill="none"/></svg>
</body></html>
